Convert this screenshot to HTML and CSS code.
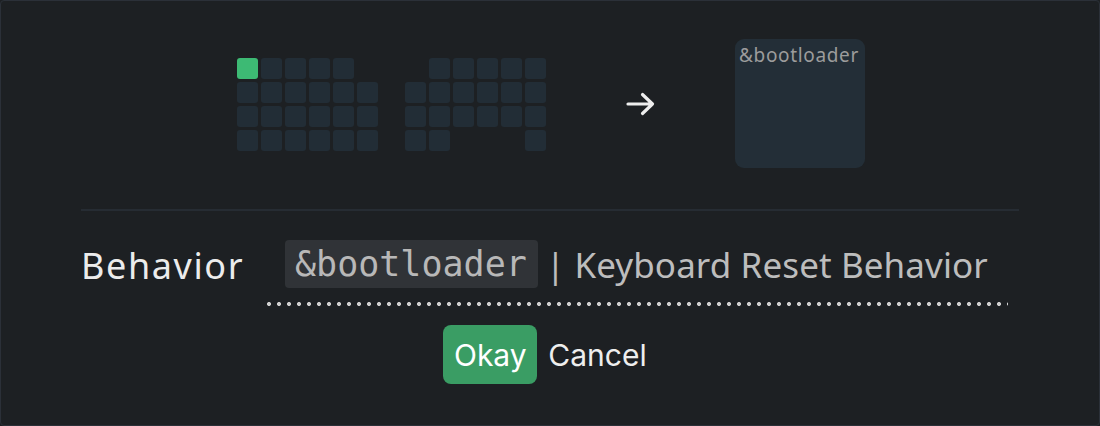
FILE: index.html
```html
<!DOCTYPE html>
<html>
<head>
<meta charset="utf-8">
<link rel="stylesheet" href="styles.css">
</head>
<body>
<div class="dialog">
  <div class="preview">
    <div class="keyboard">
      <div class="key active"></div><div class="key"></div><div class="key"></div><div class="key"></div><div class="key"></div><div class="blank"></div><div class="blank"></div><div class="blank"></div><div class="key"></div><div class="key"></div><div class="key"></div><div class="key"></div><div class="key"></div>
      <div class="key"></div><div class="key"></div><div class="key"></div><div class="key"></div><div class="key"></div><div class="key"></div><div class="blank"></div><div class="key"></div><div class="key"></div><div class="key"></div><div class="key"></div><div class="key"></div><div class="key"></div>
      <div class="key"></div><div class="key"></div><div class="key"></div><div class="key"></div><div class="key"></div><div class="key"></div><div class="blank"></div><div class="key"></div><div class="key"></div><div class="key"></div><div class="key"></div><div class="key"></div><div class="key"></div>
      <div class="key"></div><div class="key"></div><div class="key"></div><div class="key"></div><div class="key"></div><div class="key"></div><div class="blank"></div><div class="key"></div><div class="key"></div><div class="blank"></div><div class="blank"></div><div class="blank"></div><div class="key"></div>
    </div>
    <svg class="arrow" width="29" height="24" viewBox="0 0 29 24">
      <path d="M2 12 H26.5 M16.5 2.5 L26.5 12 L16.5 21.5" fill="none" stroke="#eeeeee" stroke-width="3.2" stroke-linecap="round" stroke-linejoin="round"/>
    </svg>
    <div class="target">&amp;bootloader</div>
  </div>
  <div class="divider"></div>
  <div class="behavior-row">
    <div class="label">Behavior</div>
    <div class="field">
      <span class="code">&amp;bootloader</span><span class="desc">| Keyboard Reset Behavior</span>
    </div>
  </div>
  <div class="actions">
    <button class="okay">Okay</button>
    <button class="cancel">Cancel</button>
  </div>
</div>
</body>
</html>
```

FILE: styles.css
```css
html, body {
  margin: 0;
  padding: 0;
  background: #1d2023;
}
.dialog {
  box-sizing: border-box;
  width: 1100px;
  height: 426px;
  border: 1px solid #2b3038;
  border-radius: 4px;
  background: #1d2023;
  padding: 38px 80px 0 80px;
  display: flex;
  flex-direction: column;
  font-family: "Noto Sans", sans-serif;
}
.preview {
  display: flex;
  align-items: center;
  justify-content: center;
  gap: 80px;
  height: 129px;
  padding-left: 2px;
}
.keyboard {
  display: grid;
  grid-template-columns: repeat(13, 21px);
  grid-auto-rows: 21px;
  gap: 3px;
  margin-top: 1px;
}
.key {
  background: #222d36;
  border-radius: 3px;
}
.key.active {
  background: #3dba74;
}
.arrow {
  display: block;
}
.target {
  box-sizing: border-box;
  width: 130px;
  height: 129px;
  background: #232e37;
  border-radius: 9px;
  color: #9c9c9c;
  font-size: 19px;
  letter-spacing: 0.65px;
  padding: 4px 4px;
  line-height: 25px;
}
.divider {
  height: 2px;
  background: #262c33;
  margin-top: 41px;
}
.behavior-row {
  display: flex;
  align-items: flex-start;
  margin-top: 29px;
}
.label {
  color: #ececec;
  font-size: 36px;
  letter-spacing: 1.6px;
  width: 184px;
  line-height: 48px;
  margin-top: 2px;
}
.field {
  display: flex;
  align-items: center;
  padding: 0 20px 19px 20px;
  background-image: radial-gradient(circle, #cfcfcf 1.7px, transparent 2.3px);
  background-size: 10px 6px;
  background-repeat: repeat-x;
  background-position: -1px bottom;
  width: 743px;
  box-sizing: border-box;
}
.code {
  background: #303337;
  color: #b8b8b8;
  font-family: "DejaVu Sans Mono", monospace;
  font-size: 35px;
  line-height: 48px;
  padding: 0 11px 0 10px;
  border-radius: 4px;
}
.desc {
  color: #bdbdbd;
  font-size: 35px;
  letter-spacing: 0.1px;
  margin-left: 8px;
  white-space: nowrap;
}
.actions {
  display: flex;
  justify-content: center;
  align-items: center;
  gap: 11px;
  margin-top: 18px;
  padding-right: 10px;
}
button {
  font-family: "Inter", sans-serif;
  font-size: 30px;
  border: none;
  cursor: pointer;
}
.okay {
  background: #3a9d64;
  color: #ffffff;
  height: 59px;
  width: 94px;
  border-radius: 8px;
  padding: 0;
}
.cancel {
  background: none;
  color: #eeeeee;
  padding: 0;
}
```
